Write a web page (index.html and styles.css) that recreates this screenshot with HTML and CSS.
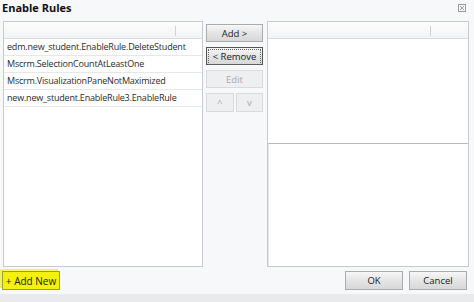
FILE: index.html
```html
<!DOCTYPE html>
<html lang="en">
<head>
  <meta charset="UTF-8">
  <title>Enable Rules</title>
  <link rel="stylesheet" href="styles.css">
</head>
<body>
  <div class="dialog">
    <div class="titlebar">
      <h1>Enable Rules</h1>
      <svg class="close" width="8" height="8" viewBox="0 0 8 8">
        <rect x="0.5" y="0.5" width="7" height="7" fill="none" stroke="#9a9a9a"/>
        <path d="M2 2 L6 6 M6 2 L2 6" stroke="#9a9a9a" stroke-width="1"/>
      </svg>
    </div>

    <div class="main">
      <div class="list">
        <div class="list-head"><span class="col-sep"></span></div>
        <div class="row">edm.new_student.EnableRule.DeleteStudent</div>
        <div class="row">Mscrm.SelectionCountAtLeastOne</div>
        <div class="row">Mscrm.VisualizationPaneNotMaximized</div>
        <div class="row">new.new_student.EnableRule3.EnableRule</div>
      </div>

      <div class="actions">
        <button class="btn">Add &gt;</button>
        <button class="btn focus"><span>&lt; Remove</span></button>
        <button class="btn disabled">Edit</button>
        <div class="arrows">
          <button class="btn disabled">^</button>
          <button class="btn disabled">v</button>
        </div>
      </div>

      <div class="selected">
        <div class="selected-top">
          <div class="list-head"><span class="col-sep"></span></div>
        </div>
        <div class="selected-bottom"></div>
      </div>
    </div>

    <div class="footer">
      <button class="btn add-new">+ Add New</button>
      <div class="footer-right">
        <button class="btn wide">OK</button>
        <button class="btn wide">Cancel</button>
      </div>
    </div>
  </div>
  <div class="strip"></div>
</body>
</html>
```

FILE: styles.css
```css
body {
  margin: 0;
  padding: 0;
  width: 474px;
  height: 302px;
  background-color: #f7f8fa;
  font-family: "Open Sans", "Noto Sans", Arial, sans-serif;
  font-size: 9px;
  color: #2a2a2a;
  overflow: hidden;
}
.dialog {
  height: 294px;
  display: flex;
  flex-direction: column;
}
.titlebar {
  height: 21px;
  display: flex;
  justify-content: space-between;
  align-items: flex-start;
  padding: 0 8px 0 2px;
}
h1 {
  margin: 0;
  font-size: 11px;
  font-weight: bold;
  line-height: 15px;
  color: #111;
}
.close {
  margin-top: 4px;
}
.main {
  display: flex;
  height: 246px;
  padding-left: 3px;
}
.list {
  width: 198px;
  border: 1px solid #c8cacd;
  background-color: #fff;
}
.list-head {
  height: 16px;
  border-bottom: 1px solid #d8dadd;
  background: linear-gradient(#fdfdfd, #f2f3f5);
  position: relative;
}
.col-sep {
  position: absolute;
  left: 171px;
  top: 4px;
  width: 1px;
  height: 10px;
  background-color: #cfd1d4;
}
.row {
  height: 16px;
  line-height: 16px;
  padding-left: 3px;
  border-bottom: 1px solid #e6e7e9;
  white-space: nowrap;
  letter-spacing: -0.2px;
}
.actions {
  width: 57px;
  margin-left: 3px;
  padding-top: 3px;
  display: flex;
  flex-direction: column;
  gap: 5px;
}
.btn {
  height: 18px;
  padding: 0;
  font-family: inherit;
  font-size: 9.5px;
  color: #222;
  border: 1px solid #a9abae;
  background: linear-gradient(#f7f7f7, #e3e3e3 55%, #d8d8d8);
}
.btn.focus {
  border-color: #555;
  padding: 1px;
}
.btn.focus span {
  display: block;
  height: 14px;
  line-height: 14px;
  border: 1px dotted #666;
}
.btn.disabled {
  color: #a6a8ab;
  border-color: #d9dadc;
  background: #eeeff1;
}
.arrows {
  display: flex;
  gap: 2px;
}
.arrows .btn {
  flex: 1;
  height: 19px;
}
.selected {
  width: 200px;
  margin-left: 4px;
  border: 1px solid #c8cacd;
  display: flex;
  flex-direction: column;
}
.selected-top {
  height: 121px;
  background-color: #fff;
  border-bottom: 1px solid #b9bbbe;
}
.selected-top .col-sep {
  left: 162px;
}
.selected-bottom {
  flex: 1;
  background-color: #fff;
  border-left: 1px solid #e4e5e7;
}
.footer {
  display: flex;
  justify-content: space-between;
  align-items: center;
  padding: 4px 7px 0 2px;
}
.add-new {
  width: 58px;
  height: 19px;
  font-size: 10px;
  background: #f4f20c;
  border: 1px solid #9d9b3a;
  box-shadow: -2px -2px 0 #f4f35a;
}
.footer-right {
  display: flex;
  gap: 6px;
}
.wide {
  width: 58px;
  height: 19px;
}
.strip {
  height: 8px;
  background-color: #e9eaec;
}
```
